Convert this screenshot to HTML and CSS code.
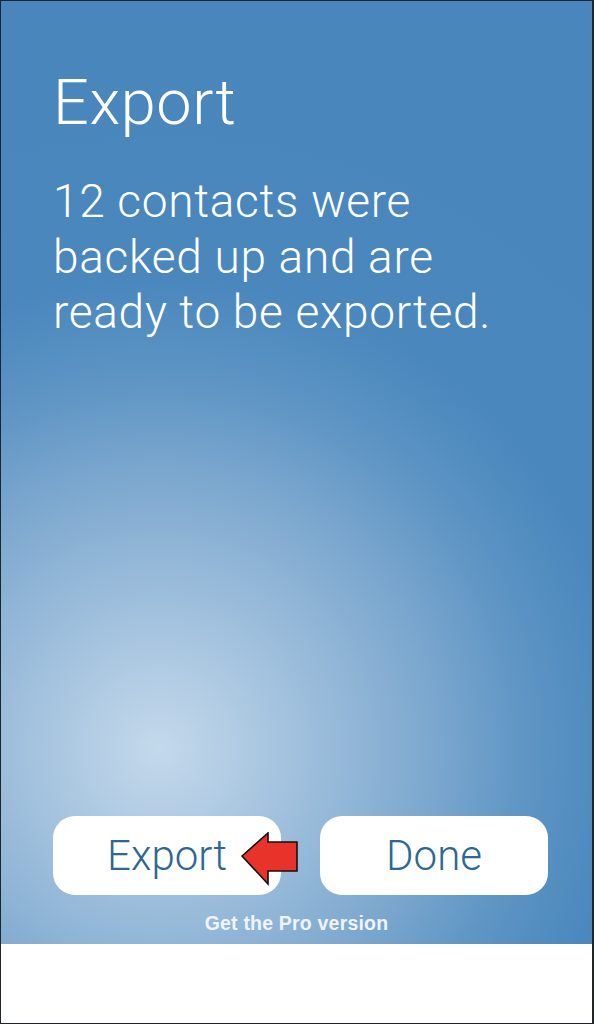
FILE: index.html
```html
<!DOCTYPE html>
<html lang="en">
<head>
  <meta charset="UTF-8" />
  <meta name="viewport" content="width=device-width, initial-scale=1.0"/>
  <title>Export</title>
  <link rel="stylesheet" href="styles.css">
</head>
<body>

  <div class="screen">
    <section class="panel">
      <h1 class="title">Export</h1>
      <p class="message">12 contacts were<br>backed up and are<br>ready to be exported.</p>

      <div class="actions">
        <button class="action">Export</button>
        <button class="action">Done</button>
        <!-- red pointer arrow -->
        <svg class="arrow" width="60" height="56" viewBox="0 0 60 56">
          <polygon points="2,24 28,1 28,10 57,10 57,39 28,39 28,52" fill="#e8332a" stroke="#111" stroke-width="1.6" stroke-linejoin="miter"/>
        </svg>
      </div>

      <div class="pro">Get the Pro version</div>
    </section>
    <div class="footer"></div>
  </div>

</body>
</html>
```

FILE: styles.css
```css
body {
  margin: 0;
  font-family: 'Roboto', 'Liberation Sans', sans-serif;
  background: #fff;
}
.screen {
  box-sizing: border-box;
  width: 594px;
  height: 1024px;
  border: 1px solid #1e252c;
  border-right-width: 2px;
  display: flex;
  flex-direction: column;
}
.panel {
  height: 943px;
  display: flex;
  flex-direction: column;
  padding: 0 0 0 52px;
  box-sizing: border-box;
  background: radial-gradient(circle at 158px 748px, #c4d9eb 0, #a3c2de 130px, #80aad0 260px, #5b93c3 380px, #4a87bd 470px, #4986bc 700px);
  color: #fff;
}
.title {
  margin: 67px 0 0;
  font-size: 63px;
  font-weight: 300;
  line-height: 70px;
  letter-spacing: 0.6px;
}
.message {
  margin: 36px 0 0;
  font-size: 46px;
  font-weight: 300;
  line-height: 55.5px;
  letter-spacing: 0.7px;
}
.actions {
  margin-top: auto;
  display: flex;
  gap: 39px;
  position: relative;
}
.action {
  width: 228px;
  height: 79px;
  border: none;
  border-radius: 22px;
  background: #fff;
  color: #2d6894;
  font-family: inherit;
  font-size: 42px;
  font-weight: 300;
  padding: 0;
}
.arrow {
  position: absolute;
  left: 187px;
  top: 16px;
}
.pro {
  margin: 17px 0 9px -52px;
  text-align: center;
  font-family: 'Liberation Sans', sans-serif;
  font-weight: bold;
  font-size: 19.5px;
  letter-spacing: 0.2px;
  color: #eef4f9;
}
.footer {
  flex: 1;
  background: #fff;
}
```
